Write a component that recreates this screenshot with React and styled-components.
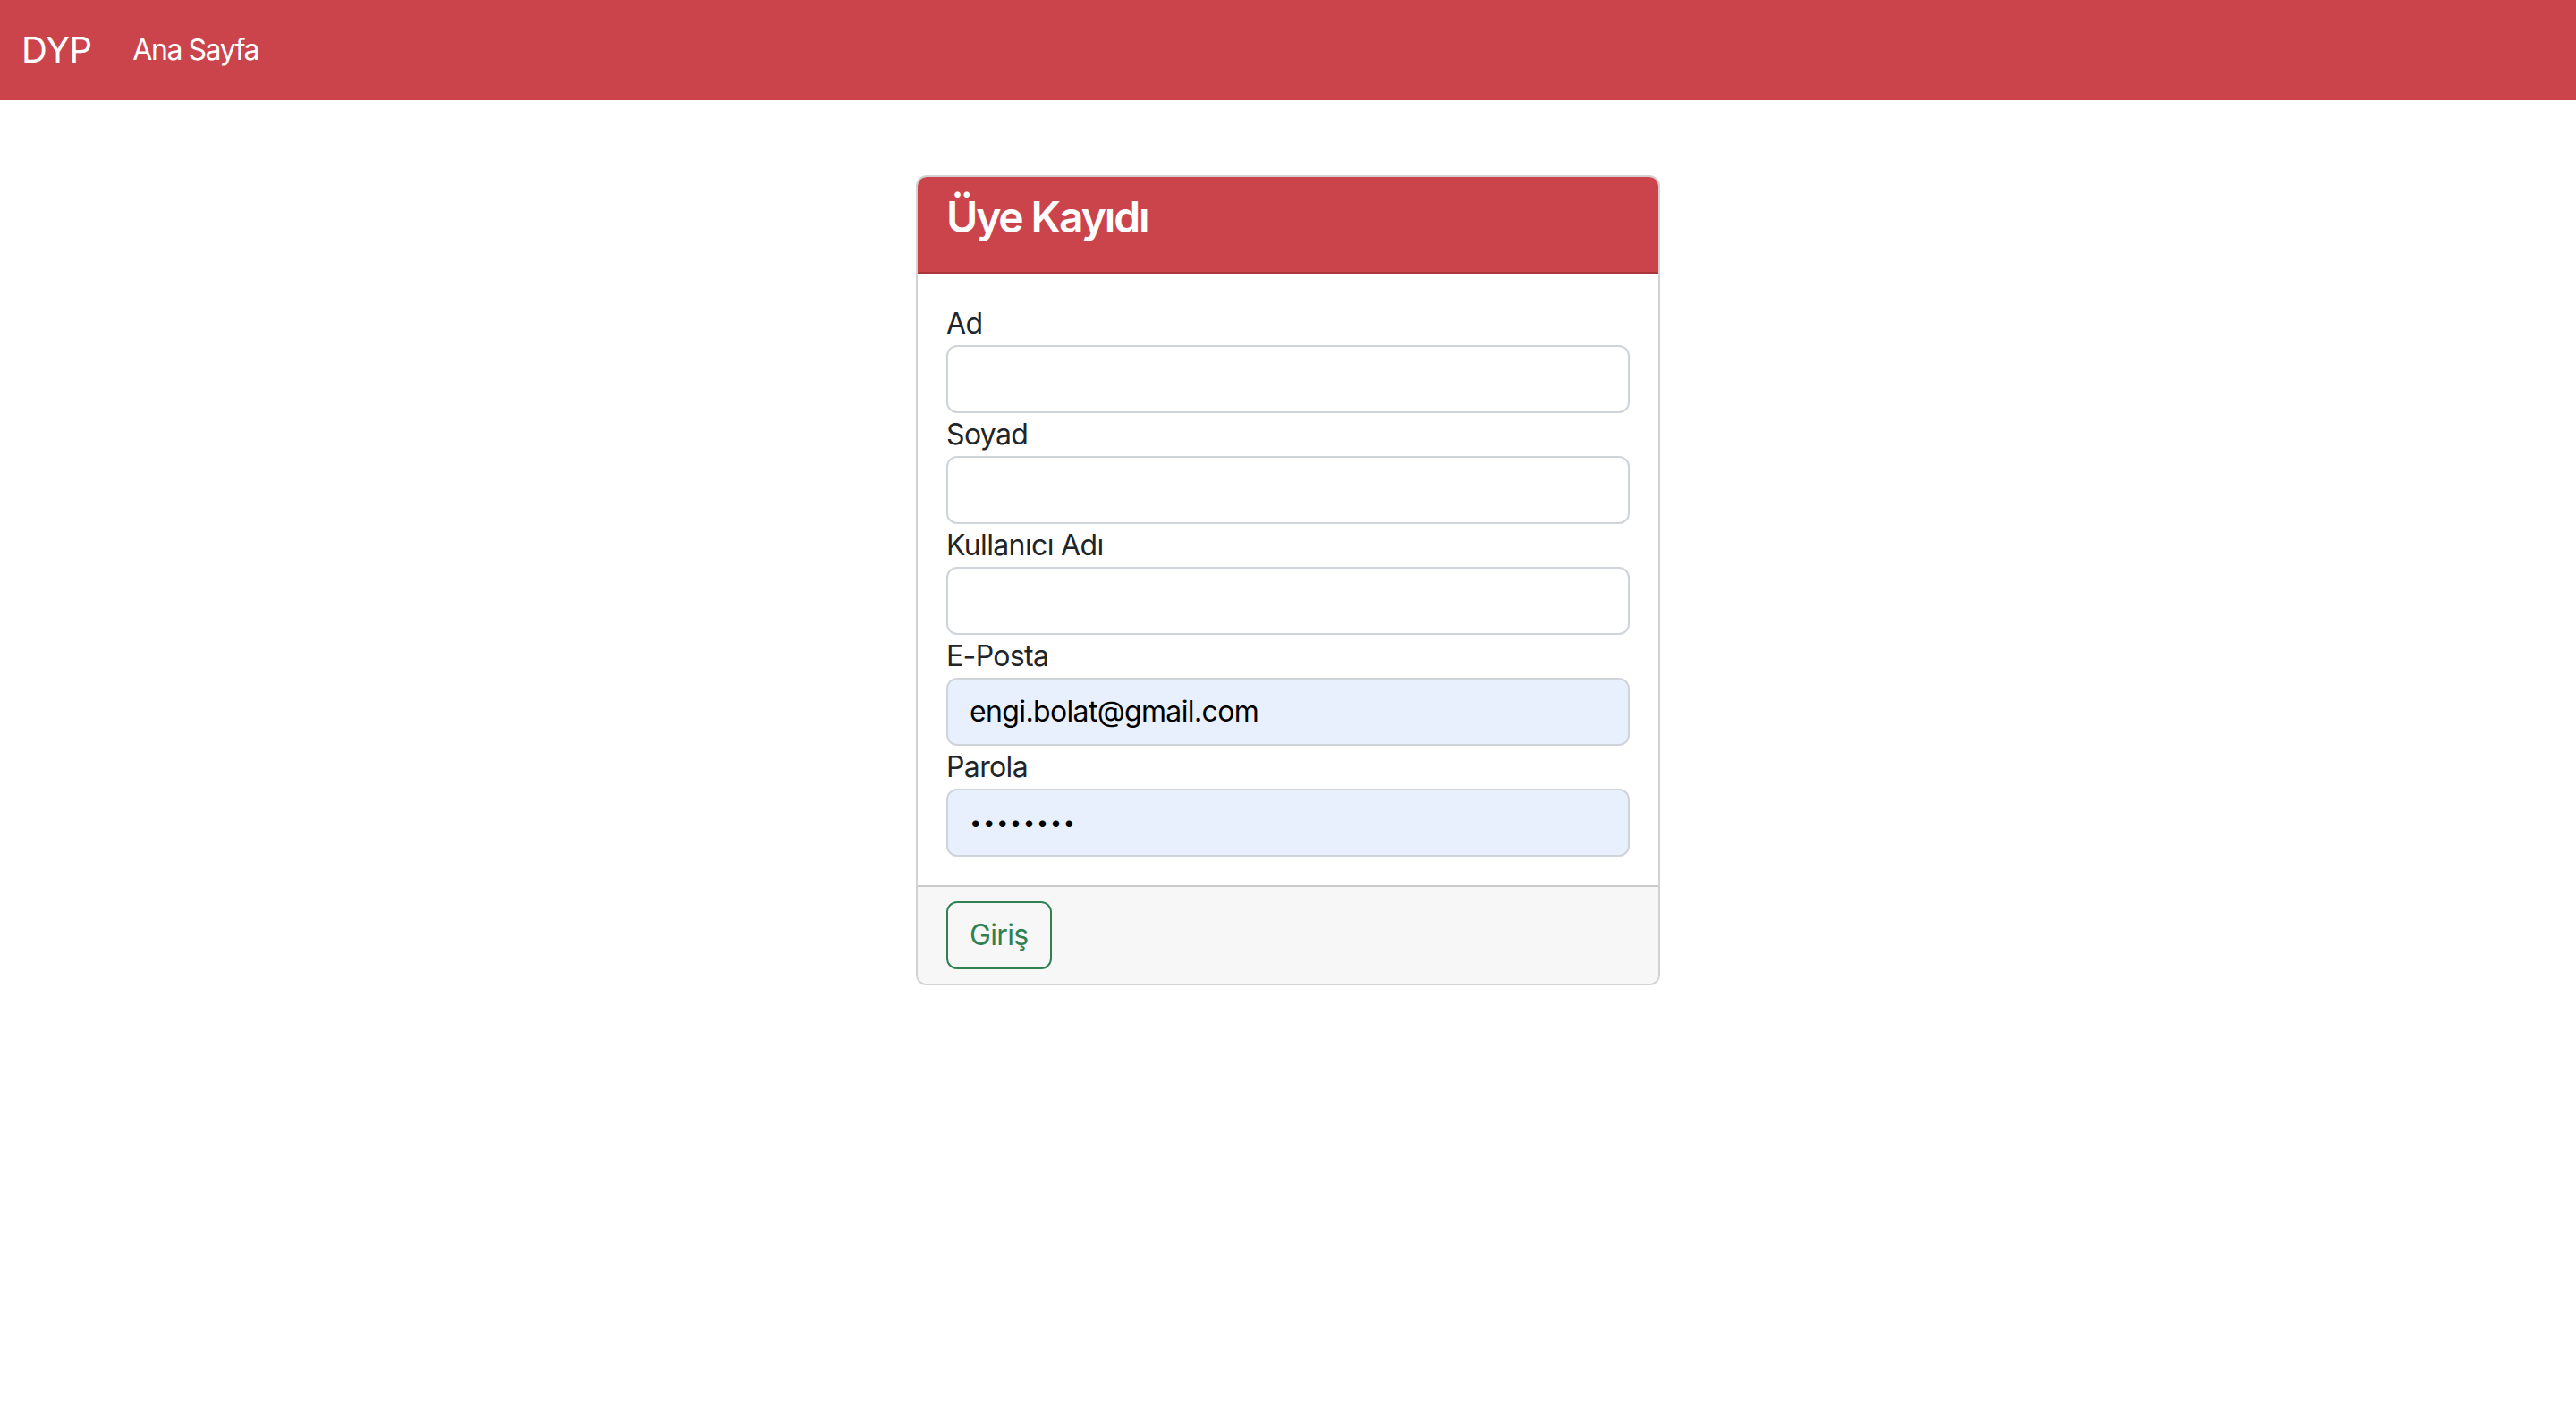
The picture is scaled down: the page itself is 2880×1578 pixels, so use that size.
import styled, { createGlobalStyle } from 'styled-components';

const GlobalStyle = createGlobalStyle`
  body {
    margin: 0;
    background: #ffffff;
    font-family: Inter, "Liberation Sans", sans-serif;
    letter-spacing: -0.04em;
    color: #212529;
  }

  * {
    box-sizing: border-box;
  }
`;

const Navbar = styled.nav`
  display: flex;
  align-items: center;
  height: 112px;
  padding: 0 24px;
  background-color: #cc444b;
`;

const Brand = styled.a`
  margin-right: 30px;
  color: #ffffff;
  font-size: 40px;
  line-height: 1.5;
  text-decoration: none;
`;

const NavLink = styled.a`
  padding: 0 16px;
  color: #ffffff;
  font-size: 32px;
  line-height: 1.5;
  letter-spacing: -0.045em;
  text-decoration: none;
`;

const Card = styled.div`
  display: flex;
  flex-direction: column;
  width: 832px;
  margin: 84px auto 0;
  border: 2px solid rgba(0, 0, 0, .175);
  border-radius: 12px;
  overflow: hidden;
`;

const CardHeader = styled.div`
  padding: 16px 32px;
  background-color: #cc444b;
  border-bottom: 2px solid rgba(0, 0, 0, .175);

  h4 {
    margin: 0 0 16px;
    color: #ffffff;
    font-size: 48px;
    font-weight: 600;
    line-height: 1.2;
    letter-spacing: -0.045em;
  }
`;

const CardBody = styled.div`
  display: flex;
  flex-direction: column;
  padding: 32px;
`;

const Label = styled.label`
  display: block;
  font-size: 32px;
  line-height: 1.5;
  color: #212529;
`;

const Input = styled.input`
  display: block;
  width: 100%;
  height: 76px;
  padding: 12px 24px;
  border: 2px solid #ced4da;
  border-radius: 12px;
  background-color: ${(props) => (props.$filled ? '#e8f0fe' : '#ffffff')};
  color: #000000;
  font-family: inherit;
  font-size: ${(props) => (props.type === 'password' ? '24px' : '32px')};
  line-height: 1.5;
  letter-spacing: ${(props) => (props.type === 'password' ? '0.06em' : 'inherit')};
  outline: none;
`;

const CardFooter = styled.div`
  padding: 16px 32px;
  background-color: #f7f7f7;
  border-top: 2px solid rgba(0, 0, 0, .175);
`;

const OutlineButton = styled.button`
  padding: 12px 24px;
  border: 2px solid #2f8052;
  border-radius: 12px;
  background: transparent;
  color: #2f8052;
  font-family: inherit;
  font-size: 32px;
  line-height: 1.5;
  letter-spacing: inherit;
`;

const fields = [
  { name: 'ad', label: 'Ad', type: 'text', value: '' },
  { name: 'soyad', label: 'Soyad', type: 'text', value: '' },
  { name: 'kullaniciAdi', label: 'Kullanıcı Adı', type: 'text', value: '' },
  { name: 'eposta', label: 'E-Posta', type: 'email', value: 'engi.bolat@gmail.com' },
  { name: 'parola', label: 'Parola', type: 'password', value: '12345678' },
];

export default function App() {
  return (
    <>
      <GlobalStyle />
      <Navbar>
        <Brand href="#">DYP</Brand>
        <NavLink href="#">Ana Sayfa</NavLink>
      </Navbar>
      <Card>
        <CardHeader>
          <h4>Üye Kayıdı</h4>
        </CardHeader>
        <CardBody>
          {fields.map((field) => (
            <div key={field.name}>
              <Label htmlFor={field.name}>{field.label}</Label>
              <Input
                id={field.name}
                type={field.type}
                defaultValue={field.value}
                $filled={field.value !== ''}
              />
            </div>
          ))}
        </CardBody>
        <CardFooter>
          <OutlineButton type="button">Giriş</OutlineButton>
        </CardFooter>
      </Card>
    </>
  );
}
